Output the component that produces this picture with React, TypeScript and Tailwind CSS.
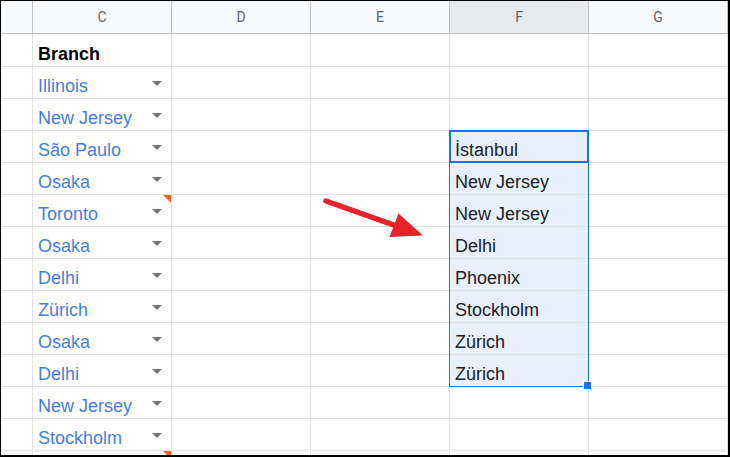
import React from "react";

const columns = ["C", "D", "E", "F", "G"];

const branches = [
  "Branch",
  "Illinois",
  "New Jersey",
  "São Paulo",
  "Osaka",
  "Toronto",
  "Osaka",
  "Delhi",
  "Zürich",
  "Osaka",
  "Delhi",
  "New Jersey",
  "Stockholm",
  "",
];

// rows with a note marker in column C
const notes = [5, 13];

// column F values, keyed by row index
const fValues: Record<number, string> = {
  3: "İstanbul",
  4: "New Jersey",
  5: "New Jersey",
  6: "Delhi",
  7: "Phoenix",
  8: "Stockholm",
  9: "Zürich",
  10: "Zürich",
};

const Dropdown = () => (
  <span className="ml-auto mr-[9px] self-center mt-[4px] w-0 h-0 border-l-[5px] border-r-[5px] border-t-[5px] border-l-transparent border-r-transparent border-t-[#777777]" />
);

const NoteMark = () => (
  <span className="absolute top-0 right-0 w-0 h-0 border-t-[8px] border-t-[#f4622a] border-l-[8px] border-l-transparent" />
);

export default function App() {
  return (
    <div
      className="relative w-[730px] h-[457px] overflow-hidden bg-white border-l border-t border-r-2 border-b-2 border-black"
      style={{ fontFamily: '"Liberation Sans", Arial, sans-serif' }}
    >
      {/* Column headers */}
      <div className="flex h-[33px] bg-[#f8f9fa] border-b border-[#c0c0c0]">
        <div className="w-[32px] shrink-0 border-r border-[#c0c0c0]" />
        {columns.map((c) => (
          <div
            key={c}
            className={`w-[139px] shrink-0 border-r border-[#c0c0c0] flex items-center justify-center text-[14px] text-[#5f6368] ${
              c === "F" ? "bg-[#e8eaed]" : ""
            }`}
            style={{ fontFamily: "Roboto, sans-serif" }}
          >
            {c}
          </div>
        ))}
      </div>

      {/* Rows */}
      {branches.map((name, i) => {
        const inRange = i >= 3 && i <= 10;
        return (
          <div key={i} className={`flex ${i === 0 ? "h-[33px]" : "h-[32px]"} border-b border-[#e2e2e3] shrink-0`}>
            <div className="w-[32px] shrink-0 border-r border-[#e2e2e3]" />
            {/* C */}
            <div className="relative w-[139px] shrink-0 border-r border-[#e2e2e3] flex items-end pl-[5px] pb-[2px] text-[18px] leading-5">
              {i === 0 ? (
                <span className="font-bold text-black">{name}</span>
              ) : (
                <>
                  <span className="text-[#437ee0]">{name}</span>
                  {name && <Dropdown />}
                </>
              )}
              {notes.includes(i) && <NoteMark />}
            </div>
            {/* D */}
            <div className="w-[139px] shrink-0 border-r border-[#e2e2e3]" />
            {/* E */}
            <div className="w-[139px] shrink-0 border-r border-[#e2e2e3]" />
            {/* F */}
            <div
              className={`w-[139px] shrink-0 border-r border-[#e2e2e3] flex items-end pl-[5px] pb-[2px] text-[18px] leading-5 text-[#202124] ${
                inRange ? "bg-[#e8f0fe]" : ""
              }`}
            >
              {fValues[i]}
            </div>
            {/* G */}
            <div className="w-[139px] shrink-0 border-r border-[#e2e2e3]" />
          </div>
        );
      })}

      {/* Selection range */}
      <div className="absolute left-[448px] top-[129px] w-[140px] h-[257px] border border-[#1a73e8] pointer-events-none" />
      <div className="absolute left-[448px] top-[129px] w-[140px] h-[33px] border-2 border-[#1a73e8] pointer-events-none" />
      <div className="absolute left-[582px] top-[380px] w-[9px] h-[9px] bg-[#1a73e8] border border-white" />

      {/* Red arrow annotation */}
      <svg className="absolute left-0 top-0 pointer-events-none" width="730" height="457" viewBox="-1 -1 730 457">
        <line x1="324" y1="199" x2="396" y2="224.5" stroke="#e8222a" strokeWidth="5.5" strokeLinecap="round" />
        <polygon points="396.5,211.5 387.5,235 421,233.5" fill="#e8222a" />
      </svg>
    </div>
  );
}
